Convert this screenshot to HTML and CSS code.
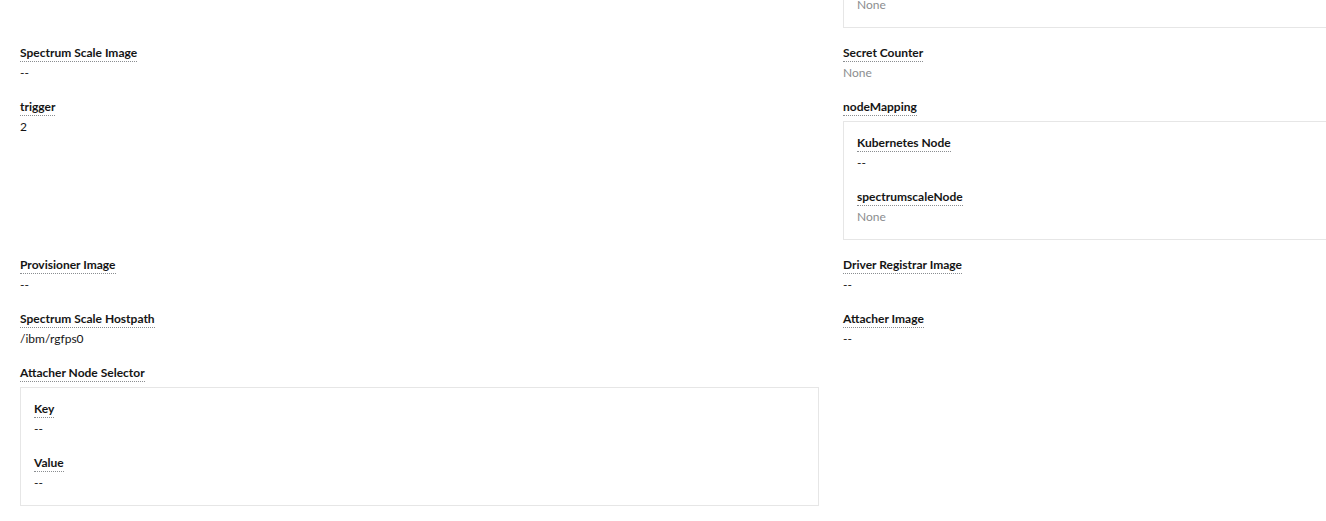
FILE: index.html
```html
<!DOCTYPE html>
<html lang="en">
<head>
<meta charset="utf-8">
<title>Operand details</title>
<link rel="stylesheet" href="styles.css">
</head>
<body>
<div class="page">
  <div class="details">
    <div class="item">
      <div class="label"><span class="term">Node Selector</span></div>
      <div class="value">--</div>
    </div>
    <div class="item">
      <div class="label"><span class="term">Tolerations</span></div>
      <div class="box">
        <div class="item">
          <div class="label"><span class="term">Effect</span></div>
          <div class="value muted">None</div>
        </div>
      </div>
    </div>

    <div class="item">
      <div class="label"><span class="term">Spectrum Scale Image</span></div>
      <div class="value">--</div>
    </div>
    <div class="item">
      <div class="label"><span class="term">Secret Counter</span></div>
      <div class="value muted">None</div>
    </div>

    <div class="item">
      <div class="label"><span class="term">trigger</span></div>
      <div class="value">2</div>
    </div>
    <div class="item">
      <div class="label"><span class="term">nodeMapping</span></div>
      <div class="box">
        <div class="item">
          <div class="label"><span class="term">Kubernetes Node</span></div>
          <div class="value">--</div>
        </div>
        <div class="item">
          <div class="label"><span class="term">spectrumscaleNode</span></div>
          <div class="value muted">None</div>
        </div>
      </div>
    </div>

    <div class="item">
      <div class="label"><span class="term">Provisioner Image</span></div>
      <div class="value">--</div>
    </div>
    <div class="item">
      <div class="label"><span class="term">Driver Registrar Image</span></div>
      <div class="value">--</div>
    </div>

    <div class="item">
      <div class="label"><span class="term">Spectrum Scale Hostpath</span></div>
      <div class="value">/ibm/rgfps0</div>
    </div>
    <div class="item">
      <div class="label"><span class="term">Attacher Image</span></div>
      <div class="value">--</div>
    </div>

    <div class="item">
      <div class="label"><span class="term">Attacher Node Selector</span></div>
      <div class="box">
        <div class="item">
          <div class="label"><span class="term">Key</span></div>
          <div class="value">--</div>
        </div>
        <div class="item">
          <div class="label"><span class="term">Value</span></div>
          <div class="value">--</div>
        </div>
      </div>
    </div>
  </div>
</div>
</body>
</html>
```
FILE: styles.css
```css
html, body {
  margin: 0;
  padding: 0;
  background: #ffffff;
  overflow: hidden;
}

body {
  font-family: Lato, "Liberation Sans", sans-serif;
  font-size: 12px;
  color: #151515;
}

/* page is shown scrolled down: the first row lies partly above the viewport */
.page {
  padding: 0 20px;
  margin-top: -60px;
}

.details {
  display: grid;
  grid-template-columns: 799px 799px;
  column-gap: 24px;
  row-gap: 16px;
  align-items: start;
}

.item {
  display: flex;
  flex-direction: column;
  align-items: flex-start;
}

.label {
  height: 18px;
  display: flex;
  align-items: flex-start;
}

.term {
  display: inline-block;
  font-weight: 700;
  line-height: 17px;
  border-bottom: 1px dotted #8a8d90;
}

.value {
  margin-top: 2px;
  line-height: 18px;
  font-size: 12px;
}

.value.muted {
  color: #8b8d8f;
}

.box {
  align-self: stretch;
  margin-top: 5px;
  border: 1px solid #e6e6e6;
  padding: 12px 13px 13px;
  display: flex;
  flex-direction: column;
  gap: 16px;
}
```
